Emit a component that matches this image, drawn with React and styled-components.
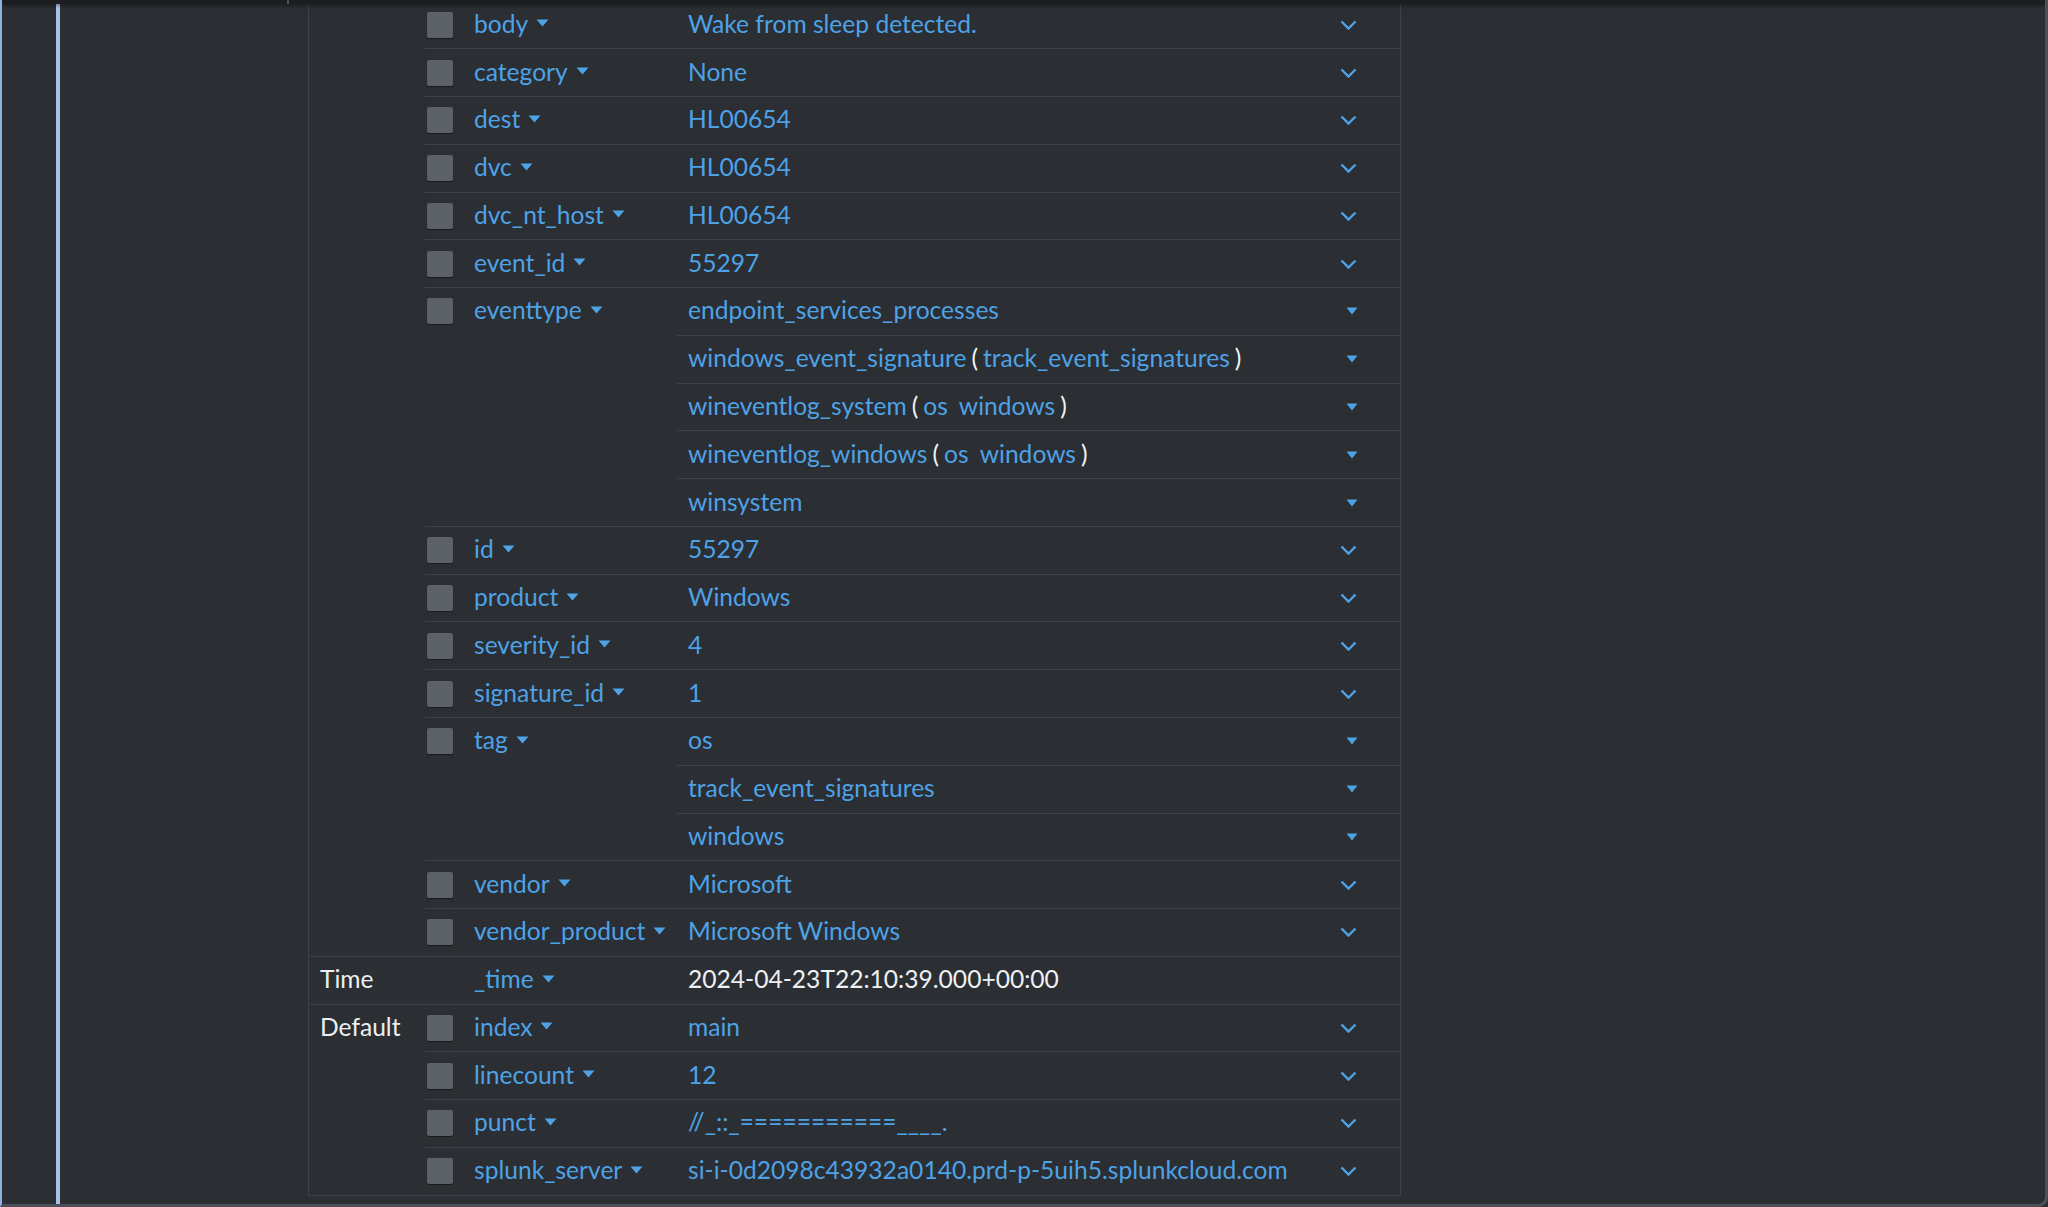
import React from 'react';
import styled, { createGlobalStyle } from 'styled-components';

const ROW = 47.77;
const LINE = ROW - 1;

const GlobalStyle = createGlobalStyle`
  html, body {
    margin: 0;
    padding: 0;
    background: #2b2e33;
  }
  body {
    font-family: Lato, 'Open Sans', sans-serif;
    overflow: hidden;
  }
`;

const Frame = styled.div`
  position: relative;
  display: flex;
  height: 1207px;
  box-sizing: border-box;
  background: #2b2e33;
  border-left: 2px solid #8cb2dd;
  border-right: 3px solid #4b5058;
  border-bottom: 3px solid #4b5058;
  border-bottom-right-radius: 10px;
  overflow: hidden;
`;

const TopShade = styled.div`
  position: absolute;
  top: 0;
  left: 0;
  right: 0;
  height: 4px;
  background: #1b1d21;
  box-shadow: 0 2px 3px rgba(0, 0, 0, 0.35);
  z-index: 2;
`;

const ShadeTick = styled.div`
  position: absolute;
  top: 0;
  left: 285px;
  width: 2px;
  height: 4px;
  background: #4a4f57;
`;

const Rail = styled.div`
  width: 54px;
  flex-shrink: 0;
  border-right: 4px solid #a6c3e6;
`;

const Content = styled.div`
  flex: 1;
  display: flex;
  align-items: flex-start;
  padding-left: 248px;
`;

const Table = styled.div`
  width: 1093px;
  box-sizing: border-box;
  margin-top: 0.5px;
  border-left: 1px solid #3d424a;
  border-right: 1px solid #3d424a;
  border-bottom: 1px solid #3d424a;
  font-size: 24.6px;
`;

const Group = styled.div`
  display: flex;
  border-top: 1px solid #3d424a;
`;

const GroupLabel = styled.div`
  width: 116px;
  flex-shrink: 0;
  box-sizing: border-box;
  padding-left: 11px;
  height: ${LINE}px;
  display: flex;
  align-items: center;
  padding-bottom: 3px;
  color: #eceef1;
`;

const Fields = styled.div`
  flex: 1;
  display: flex;
  flex-direction: column;
`;

const Field = styled.div`
  display: flex;
  & + & {
    border-top: 1px solid #3d424a;
  }
`;

const NameCell = styled.div`
  width: 252px;
  flex-shrink: 0;
  box-sizing: border-box;
  height: ${LINE}px;
  padding-left: 2px;
  display: flex;
  align-items: center;
  gap: 21px;
`;

const Check = styled.span`
  width: 26px;
  height: 26px;
  border-radius: 2px;
  background: #5c6168;
  box-shadow: 0 1px 1px rgba(0, 0, 0, 0.45);
  visibility: ${p => (p.$hidden ? 'hidden' : 'visible')};
`;

const Name = styled.span`
  display: flex;
  align-items: center;
  gap: 8px;
  color: #4ea2e6;
  white-space: nowrap;
  margin-top: -3px;
`;

const Values = styled.div`
  flex: 1;
  display: flex;
  flex-direction: column;
`;

const ValueLine = styled.div`
  display: flex;
  align-items: center;
  height: ${LINE}px;
  padding-right: 24px;
  & + & {
    border-top: 1px solid #3d424a;
  }
`;

const ValueText = styled.div`
  flex: 1;
  padding-left: 11px;
  margin-top: -3px;
  color: ${p => (p.$plain ? '#eef0f2' : '#4ea2e6')};
  white-space: nowrap;
`;

const Paren = styled.span`
  color: #f2f3f5;
  margin: 0 5px;
`;

const Tag = styled.span`
  & + & {
    margin-left: 11px;
  }
`;

const Action = styled.div`
  width: 56px;
  display: flex;
  justify-content: center;
  padding-left: ${p => (p.$tri ? 8 : 0)}px;
  box-sizing: border-box;
`;

const Caret = () => (
  <svg width="13" height="8" viewBox="0 0 13 8">
    <path d="M0.5 0.5 H12.5 L6.5 7.5 Z" fill="#4ea2e6" />
  </svg>
);

const SmallCaret = () => (
  <svg width="12" height="8" viewBox="0 0 12 8">
    <path d="M0.5 0.5 H11.5 L6 7.5 Z" fill="#4ea2e6" />
  </svg>
);

const Chevron = () => (
  <svg width="17" height="10" viewBox="0 0 17 10">
    <polyline points="1.5,1.5 8.5,8.5 15.5,1.5" fill="none" stroke="#4ea2e6" strokeWidth="2.4" strokeLinejoin="miter" />
  </svg>
);

const groups = [
  {
    label: '',
    fields: [
      { name: 'body', values: [{ text: 'Wake from sleep detected.' }] },
      { name: 'category', values: [{ text: 'None' }] },
      { name: 'dest', values: [{ text: 'HL00654' }] },
      { name: 'dvc', values: [{ text: 'HL00654' }] },
      { name: 'dvc_nt_host', values: [{ text: 'HL00654' }] },
      { name: 'event_id', values: [{ text: '55297' }] },
      {
        name: 'eventtype',
        values: [
          { text: 'endpoint_services_processes' },
          { text: 'windows_event_signature', tags: ['track_event_signatures'] },
          { text: 'wineventlog_system', tags: ['os', 'windows'] },
          { text: 'wineventlog_windows', tags: ['os', 'windows'] },
          { text: 'winsystem' },
        ],
      },
      { name: 'id', values: [{ text: '55297' }] },
      { name: 'product', values: [{ text: 'Windows' }] },
      { name: 'severity_id', values: [{ text: '4' }] },
      { name: 'signature_id', values: [{ text: '1' }] },
      {
        name: 'tag',
        values: [{ text: 'os' }, { text: 'track_event_signatures' }, { text: 'windows' }],
      },
      { name: 'vendor', values: [{ text: 'Microsoft' }] },
      { name: 'vendor_product', values: [{ text: 'Microsoft Windows' }] },
    ],
  },
  {
    label: 'Time',
    fields: [
      { name: '_time', fixed: true, values: [{ text: '2024-04-23T22:10:39.000+00:00' }] },
    ],
  },
  {
    label: 'Default',
    fields: [
      { name: 'index', values: [{ text: 'main' }] },
      { name: 'linecount', values: [{ text: '12' }] },
      { name: 'punct', values: [{ text: '//_::_===========____.' }] },
      { name: 'splunk_server', values: [{ text: 'si-i-0d2098c43932a0140.prd-p-5uih5.splunkcloud.com' }] },
    ],
  },
];

const FieldRow = ({ field }) => {
  const multi = field.values.length > 1;
  return (
    <Field>
      <NameCell>
        <Check $hidden={field.fixed} />
        <Name>
          {field.name}
          <Caret />
        </Name>
      </NameCell>
      <Values>
        {field.values.map((v, i) => (
          <ValueLine key={i}>
            <ValueText $plain={field.fixed}>
              {v.text}
              {v.tags && (
                <>
                  <Paren>(</Paren>
                  {v.tags.map(t => (
                    <Tag key={t}>{t}</Tag>
                  ))}
                  <Paren>)</Paren>
                </>
              )}
            </ValueText>
            {!field.fixed && (
              <Action $tri={multi}>{multi ? <SmallCaret /> : <Chevron />}</Action>
            )}
          </ValueLine>
        ))}
      </Values>
    </Field>
  );
};

export default function App() {
  return (
    <>
      <GlobalStyle />
      <Frame>
        <TopShade>
          <ShadeTick />
        </TopShade>
        <Rail />
        <Content>
          <Table>
            {groups.map((g, gi) => (
              <Group key={gi}>
                <GroupLabel>{g.label}</GroupLabel>
                <Fields>
                  {g.fields.map(f => (
                    <FieldRow key={f.name} field={f} />
                  ))}
                </Fields>
              </Group>
            ))}
          </Table>
        </Content>
      </Frame>
    </>
  );
}
